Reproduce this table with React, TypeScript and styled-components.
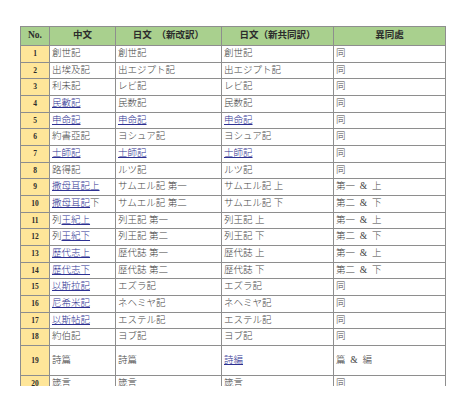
import React from "react";
import styled, { createGlobalStyle } from "styled-components";

const GlobalStyle = createGlobalStyle`
  html, body {
    margin: 0;
    padding: 0;
    background: #fff;
  }
  body {
    font-family: "Liberation Serif", "Noto Sans CJK JP", serif;
  }
`;

const Page = styled.div`
  padding: 26px 0 0 20px;
  width: 454px;
  height: 386px;
  box-sizing: border-box;
`;

// the source screenshot cuts the table a little below row 20
const Clip = styled.div`
  height: 367px;
  width: 426px;
  overflow: hidden;
`;

const Table = styled.table`
  border-collapse: collapse;
  table-layout: fixed;
  width: 425px;
  color: #454545;
`;

const HeadRow = styled.tr`
  height: 19px;
`;

const Row = styled.tr<{ $tall?: boolean }>`
  height: ${(p) => (p.$tall ? "30px" : "16.67px")};
`;

const HeadCell = styled.th`
  background: #a9d08e;
  border: 1px solid #8e8e8e;
  font-size: 9.5px;
  font-weight: bold;
  color: #2c2c2c;
  text-align: center;
  padding: 0;
  line-height: 1;
  white-space: pre;
`;

const NoCell = styled.td`
  background: #ffe699;
  border: 1px solid #8e8e8e;
  font-size: 7.5px;
  font-weight: bold;
  color: #2c2c2c;
  text-align: center;
  padding: 0;
  line-height: 1;
`;

const Cell = styled.td`
  border: 1px solid #8e8e8e;
  font-size: 9.5px;
  font-weight: 300;
  padding: 0 0 0 2px;
  line-height: 1;
  white-space: pre;
  overflow: hidden;
`;

const Link = styled.span`
  color: #2e3192;
  text-decoration: underline;
  text-underline-offset: 1px;
`;

// [..] marks the underlined part of a cell
const rows: string[][] = [
  ["1", "創世記", "創世記", "創世記", "同"],
  ["2", "出埃及記", "出エジプト記", "出エジプト記", "同"],
  ["3", "利未記", "レビ記", "レビ記", "同"],
  ["4", "[民數記]", "民数記", "民数記", "同"],
  ["5", "[申命記]", "[申命記]", "[申命記]", "同"],
  ["6", "約書亞記", "ヨシュア記", "ヨシュア記", "同"],
  ["7", "[士師記]", "[士師記]", "[士師記]", "同"],
  ["8", "路得記", "ルツ記", "ルツ記", "同"],
  ["9", "[撒母耳記上]", "サムエル記 第一", "サムエル記 上", "第一  &  上"],
  ["10", "[撒母耳記]下", "サムエル記 第二", "サムエル記 下", "第二  &  下"],
  ["11", "列[王紀上]", "列王記 第一", "列王記 上", "第一  &  上"],
  ["12", "列[王紀下]", "列王記 第二", "列王記 下", "第二  &  下"],
  ["13", "[歷代志上]", "歴代誌 第一", "歴代誌 上", "第一  &  上"],
  ["14", "[歷代志下]", "歴代誌 第二", "歴代誌 下", "第二  &  下"],
  ["15", "[以斯拉記]", "エズラ記", "エズラ記", "同"],
  ["16", "[尼希米記]", "ネヘミヤ記", "ネヘミヤ記", "同"],
  ["17", "[以斯帖記]", "エステル記", "エステル記", "同"],
  ["18", "約伯記", "ヨブ記", "ヨブ記", "同"],
  ["19", "詩篇", "詩篇", "[詩編]", "篇  &  編"],
  ["20", "箴言", "箴言", "箴言", "同"],
  ["21", "", "", "", ""],
];

function renderText(text: string) {
  return text.split(/(\[[^\]]*\])/).map((part, i) => {
    if (part.startsWith("[")) {
      return <Link key={i}>{part.slice(1, -1)}</Link>;
    }
    return <React.Fragment key={i}>{part}</React.Fragment>;
  });
}

export default function App() {
  return (
    <>
      <GlobalStyle />
      <Page>
        <Clip>
          <Table>
            <colgroup>
              <col style={{ width: 29 }} />
              <col style={{ width: 66 }} />
              <col style={{ width: 106 }} />
              <col style={{ width: 112 }} />
              <col style={{ width: 112 }} />
            </colgroup>
            <thead>
              <HeadRow>
                <HeadCell>No.</HeadCell>
                <HeadCell>中文</HeadCell>
                <HeadCell>{"日文　（新改訳）"}</HeadCell>
                <HeadCell>日文（新共同訳）</HeadCell>
                <HeadCell>異同處</HeadCell>
              </HeadRow>
            </thead>
            <tbody>
              {rows.map(([no, zh, jaNew, jaJoint, diff]) => (
                <Row key={no} $tall={no === "19"}>
                  <NoCell>{no === "21" ? "" : no}</NoCell>
                  <Cell>{renderText(zh)}</Cell>
                  <Cell>{renderText(jaNew)}</Cell>
                  <Cell>{renderText(jaJoint)}</Cell>
                  <Cell>{renderText(diff)}</Cell>
                </Row>
              ))}
            </tbody>
          </Table>
        </Clip>
      </Page>
    </>
  );
}
